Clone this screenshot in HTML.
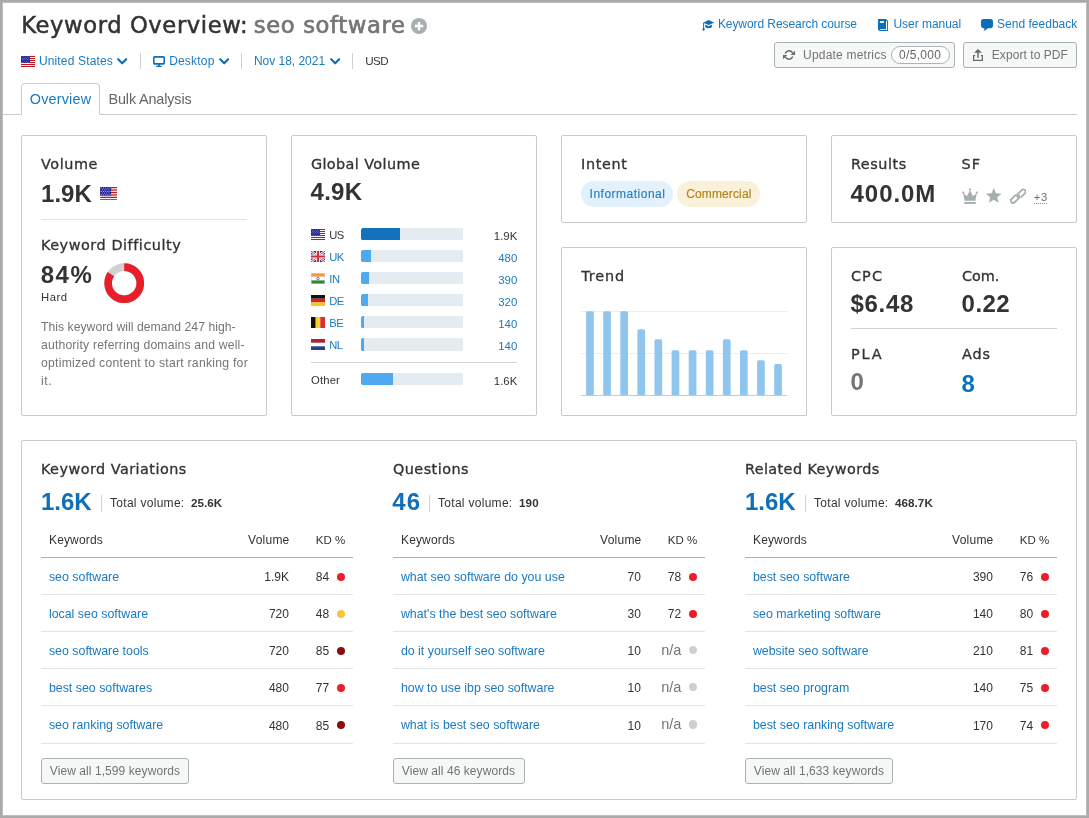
<!DOCTYPE html>
<html lang="en"><head><meta charset="utf-8"><title>Keyword Overview: seo software</title>
<style>
html,body{margin:0;padding:0;background:#fff}
body{width:1089px;height:818px;position:relative;overflow:hidden;font-family:'Liberation Sans',sans-serif;color:#333}
.t{position:absolute;white-space:pre;line-height:1}
.b{position:absolute;box-sizing:border-box;display:block}
.card{position:absolute;box-sizing:border-box;border:1px solid #cacaca;border-radius:2px;background:#fff}
.btn{position:absolute;box-sizing:border-box;border:1px solid #a9b3b6;border-radius:3px;background:#f6f7f7}
.hl{position:absolute;height:1px;background:#e2e5e8}
#wrap{position:absolute;left:0;top:0;width:1089px;height:818px;will-change:transform;background:#fff}
</style></head><body><div id="wrap">

<div class="b" style="left:0;top:0;width:1089px;height:818px;border:2px solid #aaa;z-index:50;pointer-events:none"></div>
<div class="b" style="left:2px;top:2px;width:1085px;height:814px;border:1px solid #bfbfbf;z-index:50;pointer-events:none"></div>
<div class="t" style="left:21.26px;top:14.003px;font-size:22.7px;color:#333;font-family:'DejaVu Sans', 'Liberation Sans', sans-serif;letter-spacing:0.571px;-webkit-text-stroke:.5px #333;">Keyword Overview:</div>
<div class="t" style="left:253.87px;top:14.003px;font-size:22.7px;color:#757575;font-family:'DejaVu Sans', 'Liberation Sans', sans-serif;letter-spacing:0.614px;-webkit-text-stroke:.65px #747474;">seo software</div>
<svg class="b" style="left:411px;top:17.9px;" width="16" height="16" viewBox="0 0 16 16"><circle cx="8" cy="8" r="8" fill="#a6b0b3"/><path d="M8.05 3.9V12.2M3.9 8.05H12.2" stroke="#fff" stroke-width="2.4"/></svg>
<svg class="b" style="left:21px;top:56px;" width="14" height="11" viewBox="0 0 14 11"><rect width="14" height="11" fill="#fff"/><rect x="0" y="0" width="14" height="1.05" fill="#c4161c"/><rect x="0" y="2" width="14" height="1.05" fill="#c4161c"/><rect x="0" y="4" width="14" height="1.05" fill="#c4161c"/><rect x="0" y="6" width="14" height="1.05" fill="#c4161c"/><rect x="0" y="8" width="14" height="1.05" fill="#c4161c"/><rect x="0" y="10" width="14" height="1.05" fill="#c4161c"/><rect width="9" height="7" fill="#1d2396"/><g fill="#fff" opacity=".8"><circle cx="0.90" cy="0.90" r=".42"/><circle cx="2.70" cy="0.90" r=".42"/><circle cx="4.50" cy="0.90" r=".42"/><circle cx="6.30" cy="0.90" r=".42"/><circle cx="8.10" cy="0.90" r=".42"/><circle cx="1.80" cy="2.25" r=".42"/><circle cx="3.60" cy="2.25" r=".42"/><circle cx="5.40" cy="2.25" r=".42"/><circle cx="7.20" cy="2.25" r=".42"/><circle cx="0.90" cy="3.60" r=".42"/><circle cx="2.70" cy="3.60" r=".42"/><circle cx="4.50" cy="3.60" r=".42"/><circle cx="6.30" cy="3.60" r=".42"/><circle cx="8.10" cy="3.60" r=".42"/><circle cx="1.80" cy="4.95" r=".42"/><circle cx="3.60" cy="4.95" r=".42"/><circle cx="5.40" cy="4.95" r=".42"/><circle cx="7.20" cy="4.95" r=".42"/><circle cx="0.90" cy="6.30" r=".42"/><circle cx="2.70" cy="6.30" r=".42"/><circle cx="4.50" cy="6.30" r=".42"/><circle cx="6.30" cy="6.30" r=".42"/><circle cx="8.10" cy="6.30" r=".42"/></g></svg>
<div class="t" style="left:38.90px;top:55.014px;font-size:12px;color:#1a7ac0;letter-spacing:0.159px;">United States</div>
<svg class="b" style="left:117.2px;top:58.4px;" width="10.4" height="6.8" viewBox="0 0 10.4 6.8"><path d="M1.2 1.2L5.2 5.3L9.2 1.2" fill="none" stroke="#0d6eb8" stroke-width="2.1" stroke-linecap="round" stroke-linejoin="round"/></svg>
<div class="b" style="left:140px;top:53px;width:1px;height:16px;background:#d0d0d0"></div>
<svg class="b" style="left:153px;top:55.5px;" width="12" height="11.6" viewBox="0 0 12 11.5"><rect x=".8" y=".8" width="10.4" height="7" rx=".8" fill="none" stroke="#0d6eb8" stroke-width="1.6"/><path d="M6 7.8V10M3.2 10.6H8.8" stroke="#0d6eb8" stroke-width="1.7"/></svg>
<div class="t" style="left:169.15px;top:55.014px;font-size:12px;color:#1a7ac0;letter-spacing:0.195px;">Desktop</div>
<svg class="b" style="left:218.5px;top:58.4px;" width="10.4" height="6.8" viewBox="0 0 10.4 6.8"><path d="M1.2 1.2L5.2 5.3L9.2 1.2" fill="none" stroke="#0d6eb8" stroke-width="2.1" stroke-linecap="round" stroke-linejoin="round"/></svg>
<div class="b" style="left:241px;top:53px;width:1px;height:16px;background:#d0d0d0"></div>
<div class="t" style="left:253.90px;top:55.014px;font-size:12px;color:#1a7ac0;letter-spacing:-0.017px;">Nov 18, 2021</div>
<svg class="b" style="left:329.6px;top:58.4px;" width="10.4" height="6.8" viewBox="0 0 10.4 6.8"><path d="M1.2 1.2L5.2 5.3L9.2 1.2" fill="none" stroke="#0d6eb8" stroke-width="2.1" stroke-linecap="round" stroke-linejoin="round"/></svg>
<div class="b" style="left:352px;top:53px;width:1px;height:16px;background:#d0d0d0"></div>
<div class="t" style="left:365.17px;top:55.009px;font-size:11.6px;color:#333;letter-spacing:-0.537px;">USD</div>
<div class="b" style="left:3px;top:114px;width:1074px;height:1px;background:#cbcbcb"></div>
<div class="b" style="left:21px;top:83px;width:79px;height:32px;border:1px solid #cbcbcb;border-bottom:1px solid #fff;border-radius:4px 4px 0 0;background:#fff"></div>
<div class="t" style="left:29.78px;top:92.010px;font-size:14.4px;color:#1a7ac0;letter-spacing:0.194px;">Overview</div>
<div class="t" style="left:108.48px;top:92.010px;font-size:14.4px;color:#666;letter-spacing:-0.130px;">Bulk Analysis</div>
<svg class="b" style="left:702px;top:19.8px;" width="12.2" height="11.2" viewBox="0 0 12.2 11.2"><path d="M1.2 2.7L6.6 .1L12.1 2.6L6.6 5.1Z" fill="#0d6eb8"/><path d="M3.3 4.6L6.6 6.2L9.9 4.6V7.3Q6.6 9.3 3.3 7.3Z" fill="#0d6eb8"/><path d="M1.6 2.9V8" stroke="#0d6eb8" stroke-width="1"/><path d="M1.6 7.4L3 9.2L1.6 11.2L.2 9.2Z" fill="#0d6eb8"/></svg>
<div class="t" style="left:717.90px;top:18.001px;font-size:12px;color:#1a7ac0;letter-spacing:-0.074px;">Keyword Research course</div>
<svg class="b" style="left:877.9px;top:18.8px;" width="10.2" height="12.2" viewBox="0 0 10.2 12.2"><path d="M0 0H7.9L10.2 1.9V12.2H1.7L0 10.3Z" fill="#0d6eb8"/><path d="M8 1.5L9.1 2.4V11.1H2.2L1.5 10.3H8Z" fill="#fff"/><rect x="1.9" y="2.1" width="4.1" height="1.8" fill="#fff"/></svg>
<div class="t" style="left:893.40px;top:18.001px;font-size:12px;color:#1a7ac0;letter-spacing:-0.023px;">User manual</div>
<svg class="b" style="left:981px;top:18.8px;" width="12" height="12.2" viewBox="0 0 12 12.2"><path d="M2.4 0H9.6Q12 0 12 2.4V6.8Q12 9.2 9.6 9.2H7L3.3 12.1V9.2H2.4Q0 9.2 0 6.8V2.4Q0 0 2.4 0Z" fill="#0d6eb8"/></svg>
<div class="t" style="left:997.00px;top:18.001px;font-size:12px;color:#1a7ac0;letter-spacing:0.020px;">Send feedback</div>
<div class="btn" style="left:774px;top:42px;width:181px;height:26px"></div>
<svg class="b" style="left:783px;top:49.9px;" width="12" height="10" viewBox="0 0 12 10"><path d="M2.2 3.5A4.1 4.1 0 0 1 9.6 2.9" fill="none" stroke="#686868" stroke-width="1.5"/><path d="M9.8 6.5A4.1 4.1 0 0 1 2.4 7.1" fill="none" stroke="#686868" stroke-width="1.5"/><path d="M12 .7V5H7.7Z" fill="#686868"/><path d="M0 9.3V5H4.3Z" fill="#686868"/></svg>
<div class="t" style="left:803.10px;top:49.001px;font-size:12px;color:#737373;letter-spacing:0.200px;">Update metrics</div>
<div class="b" style="left:891px;top:46px;width:59px;height:18px;border:1px solid #aeb3b7;border-radius:9px;background:#fff"></div>
<div class="t" style="left:899.10px;top:49.001px;font-size:12px;color:#666;letter-spacing:0.292px;">0/5,000</div>
<div class="btn" style="left:963px;top:42px;width:114px;height:26px"></div>
<svg class="b" style="left:973px;top:49px;" width="10" height="12" viewBox="0 0 10 12"><path d="M2.1 6.6H.6V11.3H9.4V6.6H7.9" fill="none" stroke="#686868" stroke-width="1.25"/><path d="M5 3.3V8.8" stroke="#686868" stroke-width="1.5"/><path d="M5 0L8.9 3.8H1.1Z" fill="#686868"/></svg>
<div class="t" style="left:991.80px;top:49.001px;font-size:12px;color:#737373;letter-spacing:0.062px;">Export to PDF</div>
<div class="card" style="left:21px;top:135px;width:246px;height:281px"></div>
<div class="card" style="left:291px;top:135px;width:246px;height:281px"></div>
<div class="card" style="left:561px;top:135px;width:246px;height:88px"></div>
<div class="card" style="left:561px;top:247px;width:246px;height:169px"></div>
<div class="card" style="left:831px;top:135px;width:246px;height:88px"></div>
<div class="card" style="left:831px;top:247px;width:246px;height:169px"></div>
<div class="t" style="left:41.03px;top:157.001px;font-size:14.4px;color:#333;font-family:'DejaVu Sans', 'Liberation Sans', sans-serif;letter-spacing:0.582px;-webkit-text-stroke:.32px #333;">Volume</div>
<div class="t" style="left:41.00px;top:182.012px;font-size:24px;color:#333;font-weight:700;letter-spacing:0.032px;">1.9K</div>
<svg class="b" style="left:99.5px;top:187px;" width="17.4" height="13.4" viewBox="0 0 14 11"><rect width="14" height="11" fill="#fff"/><rect x="0" y="0" width="14" height="1.05" fill="#c4161c"/><rect x="0" y="2" width="14" height="1.05" fill="#c4161c"/><rect x="0" y="4" width="14" height="1.05" fill="#c4161c"/><rect x="0" y="6" width="14" height="1.05" fill="#c4161c"/><rect x="0" y="8" width="14" height="1.05" fill="#c4161c"/><rect x="0" y="10" width="14" height="1.05" fill="#c4161c"/><rect width="9" height="7" fill="#1d2396"/><g fill="#fff" opacity=".8"><circle cx="0.90" cy="0.90" r=".42"/><circle cx="2.70" cy="0.90" r=".42"/><circle cx="4.50" cy="0.90" r=".42"/><circle cx="6.30" cy="0.90" r=".42"/><circle cx="8.10" cy="0.90" r=".42"/><circle cx="1.80" cy="2.25" r=".42"/><circle cx="3.60" cy="2.25" r=".42"/><circle cx="5.40" cy="2.25" r=".42"/><circle cx="7.20" cy="2.25" r=".42"/><circle cx="0.90" cy="3.60" r=".42"/><circle cx="2.70" cy="3.60" r=".42"/><circle cx="4.50" cy="3.60" r=".42"/><circle cx="6.30" cy="3.60" r=".42"/><circle cx="8.10" cy="3.60" r=".42"/><circle cx="1.80" cy="4.95" r=".42"/><circle cx="3.60" cy="4.95" r=".42"/><circle cx="5.40" cy="4.95" r=".42"/><circle cx="7.20" cy="4.95" r=".42"/><circle cx="0.90" cy="6.30" r=".42"/><circle cx="2.70" cy="6.30" r=".42"/><circle cx="4.50" cy="6.30" r=".42"/><circle cx="6.30" cy="6.30" r=".42"/><circle cx="8.10" cy="6.30" r=".42"/></g></svg>
<div class="hl" style="left:41px;top:219px;width:206px"></div>
<div class="t" style="left:40.88px;top:238.001px;font-size:14.4px;color:#333;font-family:'DejaVu Sans', 'Liberation Sans', sans-serif;letter-spacing:0.560px;-webkit-text-stroke:.32px #333;">Keyword Difficulty</div>
<div class="t" style="left:40.80px;top:263.009px;font-size:24px;color:#333;font-weight:700;letter-spacing:1.477px;">84%</div>
<div class="t" style="left:41.04px;top:292.000px;font-size:11.3px;color:#333;letter-spacing:0.477px;">Hard</div>
<svg class="b" style="left:103.8px;top:262.9px;" width="40.4" height="40.4" viewBox="0 0 41 41"><circle cx="20.5" cy="20.5" r="16.3" fill="none" stroke="#d1d1d1" stroke-width="7.8"/><circle cx="20.5" cy="20.5" r="16.3" fill="none" stroke="#e81f2a" stroke-width="7.8" stroke-dasharray="86.03 102.42" transform="rotate(-90 20.5 20.5)"/></svg>
<div class="t" style="left:40.99px;top:321.010px;font-size:12.2px;color:#757575;letter-spacing:0.026px;">This keyword will demand 247 high-</div>
<div class="t" style="left:40.99px;top:339.013px;font-size:12.2px;color:#757575;letter-spacing:0.178px;">authority referring domains and well-</div>
<div class="t" style="left:40.99px;top:357.001px;font-size:12.2px;color:#757575;letter-spacing:0.259px;">optimized content to start ranking for</div>
<div class="t" style="left:40.99px;top:375.004px;font-size:12.2px;color:#757575;letter-spacing:0.568px;">it.</div>
<div class="t" style="left:310.88px;top:157.001px;font-size:14.4px;color:#333;font-family:'DejaVu Sans', 'Liberation Sans', sans-serif;letter-spacing:0.410px;-webkit-text-stroke:.32px #333;">Global Volume</div>
<div class="t" style="left:310.60px;top:180.012px;font-size:24px;color:#333;font-weight:700;letter-spacing:0.232px;">4.9K</div>
<svg class="b" style="left:311px;top:228.7px;" width="14" height="11" viewBox="0 0 14 11"><rect width="14" height="11" fill="#fff"/><rect x="0" y="0" width="14" height="1.05" fill="#c4161c"/><rect x="0" y="2" width="14" height="1.05" fill="#c4161c"/><rect x="0" y="4" width="14" height="1.05" fill="#c4161c"/><rect x="0" y="6" width="14" height="1.05" fill="#c4161c"/><rect x="0" y="8" width="14" height="1.05" fill="#c4161c"/><rect x="0" y="10" width="14" height="1.05" fill="#c4161c"/><rect width="9" height="7" fill="#1d2396"/><g fill="#fff" opacity=".8"><circle cx="0.90" cy="0.90" r=".42"/><circle cx="2.70" cy="0.90" r=".42"/><circle cx="4.50" cy="0.90" r=".42"/><circle cx="6.30" cy="0.90" r=".42"/><circle cx="8.10" cy="0.90" r=".42"/><circle cx="1.80" cy="2.25" r=".42"/><circle cx="3.60" cy="2.25" r=".42"/><circle cx="5.40" cy="2.25" r=".42"/><circle cx="7.20" cy="2.25" r=".42"/><circle cx="0.90" cy="3.60" r=".42"/><circle cx="2.70" cy="3.60" r=".42"/><circle cx="4.50" cy="3.60" r=".42"/><circle cx="6.30" cy="3.60" r=".42"/><circle cx="8.10" cy="3.60" r=".42"/><circle cx="1.80" cy="4.95" r=".42"/><circle cx="3.60" cy="4.95" r=".42"/><circle cx="5.40" cy="4.95" r=".42"/><circle cx="7.20" cy="4.95" r=".42"/><circle cx="0.90" cy="6.30" r=".42"/><circle cx="2.70" cy="6.30" r=".42"/><circle cx="4.50" cy="6.30" r=".42"/><circle cx="6.30" cy="6.30" r=".42"/><circle cx="8.10" cy="6.30" r=".42"/></g></svg>
<div class="t" style="left:329.14px;top:230.013px;font-size:11.2px;color:#333;letter-spacing:-0.350px;">US</div>
<div class="b" style="left:361px;top:228.1px;width:102px;height:12.2px;border-radius:1.6px;background:#e4ebf1;overflow:hidden"><div style="width:38.8px;height:100%;background:#1173bf;border-radius:1.6px 0 0 1.6px"></div></div>
<div class="t" style="right:571.73px;top:231.000px;font-size:11.4px;color:#333;">1.9K</div>
<svg class="b" style="left:311px;top:250.8px;" width="14" height="11" viewBox="0 0 14 11"><rect width="14" height="11" fill="#2b3f8f"/><path d="M0 0L14 11M14 0L0 11" stroke="#fff" stroke-width="2.4"/><path d="M0 0L14 11M14 0L0 11" stroke="#d22f3a" stroke-width="1"/><path d="M7 0V11M0 5.5H14" stroke="#fff" stroke-width="3.8"/><path d="M7 0V11M0 5.5H14" stroke="#d22f3a" stroke-width="2.2"/></svg>
<div class="t" style="left:329.14px;top:252.000px;font-size:11.2px;color:#1a7ac0;letter-spacing:-0.350px;">UK</div>
<div class="b" style="left:361px;top:250.2px;width:102px;height:12.2px;border-radius:1.6px;background:#e4ebf1;overflow:hidden"><div style="width:10px;height:100%;background:#4fa9ee;border-radius:1.6px 0 0 1.6px"></div></div>
<div class="t" style="right:571.73px;top:253.003px;font-size:11.4px;color:#1a7ac0;">480</div>
<svg class="b" style="left:311px;top:272.8px;" width="14" height="11" viewBox="0 0 14 11"><rect width="14" height="11" fill="#fff"/><rect width="14" height="3.6" fill="#f59a3a"/><rect y="7.4" width="14" height="3.6" fill="#2a8a3a"/><circle cx="7" cy="5.5" r="1.3" fill="none" stroke="#3446a8" stroke-width=".7"/><rect x=".25" y=".25" width="13.5" height="10.5" fill="none" stroke="#d8d8d8" stroke-width=".5"/></svg>
<div class="t" style="left:329.14px;top:274.004px;font-size:11.2px;color:#1a7ac0;letter-spacing:-0.350px;">IN</div>
<div class="b" style="left:361px;top:272.2px;width:102px;height:12.2px;border-radius:1.6px;background:#e4ebf1;overflow:hidden"><div style="width:8px;height:100%;background:#4fa9ee;border-radius:1.6px 0 0 1.6px"></div></div>
<div class="t" style="right:571.73px;top:275.006px;font-size:11.4px;color:#1a7ac0;">390</div>
<svg class="b" style="left:311px;top:294.9px;" width="14" height="11" viewBox="0 0 14 11"><rect width="14" height="3.7" fill="#111"/><rect y="3.7" width="14" height="3.7" fill="#d6202a"/><rect y="7.3" width="14" height="3.7" fill="#f6c81e"/></svg>
<div class="t" style="left:329.14px;top:296.007px;font-size:11.2px;color:#1a7ac0;letter-spacing:-0.350px;">DE</div>
<div class="b" style="left:361px;top:294.3px;width:102px;height:12.2px;border-radius:1.6px;background:#e4ebf1;overflow:hidden"><div style="width:7px;height:100%;background:#4fa9ee;border-radius:1.6px 0 0 1.6px"></div></div>
<div class="t" style="right:571.73px;top:297.009px;font-size:11.4px;color:#1a7ac0;">320</div>
<svg class="b" style="left:311px;top:316.9px;" width="14" height="11" viewBox="0 0 14 11"><rect width="4.7" height="11" fill="#111"/><rect x="4.7" width="4.7" height="11" fill="#f6d32a"/><rect x="9.3" width="4.7" height="11" fill="#e02b35"/></svg>
<div class="t" style="left:329.14px;top:318.010px;font-size:11.2px;color:#1a7ac0;letter-spacing:-0.350px;">BE</div>
<div class="b" style="left:361px;top:316.3px;width:102px;height:12.2px;border-radius:1.6px;background:#e4ebf1;overflow:hidden"><div style="width:3px;height:100%;background:#4fa9ee;border-radius:1.6px 0 0 1.6px"></div></div>
<div class="t" style="right:571.73px;top:319.012px;font-size:11.4px;color:#1a7ac0;">140</div>
<svg class="b" style="left:311px;top:338.9px;" width="14" height="11" viewBox="0 0 14 11"><rect width="14" height="11" fill="#fff"/><rect width="14" height="3.7" fill="#b3212f"/><rect y="7.3" width="14" height="3.7" fill="#26408f"/></svg>
<div class="t" style="left:329.14px;top:340.013px;font-size:11.2px;color:#1a7ac0;letter-spacing:-0.350px;">NL</div>
<div class="b" style="left:361px;top:338.4px;width:102px;height:12.2px;border-radius:1.6px;background:#e4ebf1;overflow:hidden"><div style="width:3px;height:100%;background:#4fa9ee;border-radius:1.6px 0 0 1.6px"></div></div>
<div class="t" style="right:571.73px;top:341.000px;font-size:11.4px;color:#1a7ac0;">140</div>
<div class="hl" style="left:311px;top:362px;width:206px;background:#d3d3d3"></div>
<div class="t" style="left:311.04px;top:375.006px;font-size:11.3px;color:#333;letter-spacing:0.150px;">Other</div>
<div class="b" style="left:361px;top:373.1px;width:102px;height:12.2px;border-radius:1.6px;background:#e4ebf1;overflow:hidden"><div style="width:31.6px;height:100%;background:#4fa9ee;border-radius:1.6px 0 0 1.6px"></div></div>
<div class="t" style="right:571.73px;top:376.000px;font-size:11.4px;color:#333;">1.6K</div>
<div class="t" style="left:580.98px;top:157.001px;font-size:14.4px;color:#333;font-family:'DejaVu Sans', 'Liberation Sans', sans-serif;letter-spacing:0.663px;-webkit-text-stroke:.32px #333;">Intent</div>
<div class="b" style="left:581px;top:181px;width:92px;height:25.5px;border-radius:13px;background:#e3f1fc"></div>
<div class="t" style="left:589.60px;top:188.014px;font-size:12px;color:#2a7dc2;letter-spacing:0.494px;-webkit-text-stroke:.15px #2a7dc2;">Informational</div>
<div class="b" style="left:677px;top:181px;width:83.3px;height:25.5px;border-radius:13px;background:#fbf0d8"></div>
<div class="t" style="left:686.20px;top:188.014px;font-size:12px;color:#b1831d;letter-spacing:0.132px;-webkit-text-stroke:.15px #b1831d;">Commercial</div>
<div class="t" style="left:581.28px;top:269.014px;font-size:14.4px;color:#333;font-family:'DejaVu Sans', 'Liberation Sans', sans-serif;letter-spacing:0.887px;-webkit-text-stroke:.32px #333;">Trend</div>
<div class="hl" style="left:581px;top:311px;width:206px;background:#ededed"></div>
<div class="hl" style="left:581px;top:353px;width:206px;background:#ededed"></div>
<div class="hl" style="left:581px;top:395px;width:206px;background:#c9c9c9"></div>
<svg class="b" style="left:581px;top:305px;" width="206" height="90" viewBox="0 0 206 90"><g fill="#90c6ed"><path d="M5.10 90.00V7.80Q5.10 6.20 6.70 6.20H11.20Q12.80 6.20 12.80 7.80V90.00Z"/><path d="M22.20 90.00V7.80Q22.20 6.20 23.80 6.20H28.30Q29.90 6.20 29.90 7.80V90.00Z"/><path d="M39.30 90.00V7.80Q39.30 6.20 40.90 6.20H45.40Q47.00 6.20 47.00 7.80V90.00Z"/><path d="M56.40 90.00V25.90Q56.40 24.30 58.00 24.30H62.50Q64.10 24.30 64.10 25.90V90.00Z"/><path d="M73.50 90.00V35.80Q73.50 34.20 75.10 34.20H79.60Q81.20 34.20 81.20 35.80V90.00Z"/><path d="M90.60 90.00V46.80Q90.60 45.20 92.20 45.20H96.70Q98.30 45.20 98.30 46.80V90.00Z"/><path d="M107.70 90.00V46.80Q107.70 45.20 109.30 45.20H113.80Q115.40 45.20 115.40 46.80V90.00Z"/><path d="M124.80 90.00V46.80Q124.80 45.20 126.40 45.20H130.90Q132.50 45.20 132.50 46.80V90.00Z"/><path d="M141.90 90.00V35.80Q141.90 34.20 143.50 34.20H148.00Q149.60 34.20 149.60 35.80V90.00Z"/><path d="M159.00 90.00V46.80Q159.00 45.20 160.60 45.20H165.10Q166.70 45.20 166.70 46.80V90.00Z"/><path d="M176.10 90.00V56.90Q176.10 55.30 177.70 55.30H182.20Q183.80 55.30 183.80 56.90V90.00Z"/><path d="M193.20 90.00V60.70Q193.20 59.10 194.80 59.10H199.30Q200.90 59.10 200.90 60.70V90.00Z"/></g></svg>
<div class="t" style="left:850.88px;top:157.001px;font-size:14.4px;color:#333;font-family:'DejaVu Sans', 'Liberation Sans', sans-serif;letter-spacing:0.579px;-webkit-text-stroke:.32px #333;">Results</div>
<div class="t" style="left:961.58px;top:157.001px;font-size:14.4px;color:#333;font-family:'DejaVu Sans', 'Liberation Sans', sans-serif;letter-spacing:1.018px;-webkit-text-stroke:.32px #333;">SF</div>
<div class="t" style="left:850.60px;top:182.012px;font-size:24px;color:#333;font-weight:700;letter-spacing:0.928px;">400.0M</div>
<svg class="b" style="left:962px;top:188px;" width="16" height="16" viewBox="0 0 16 16"><path d="M2.7 12.7L1.1 5.1L5 8.3L8 2L11 8.3L14.9 5.1L13.3 12.7Z" fill="#a5afb2"/><circle cx="8" cy="1.3" r="1.15" fill="#a5afb2"/><circle cx="1.25" cy="4.6" r="1.15" fill="#a5afb2"/><circle cx="14.75" cy="4.6" r="1.15" fill="#a5afb2"/><rect x="2.2" y="14" width="11.6" height="1.9" fill="#a5afb2"/></svg>
<svg class="b" style="left:986.1px;top:188.2px;" width="15.5" height="14.8" viewBox="0 0 15.5 14.8"><path d="M7.75 0.00L9.92 5.16L15.50 5.63L11.27 9.29L12.54 14.74L7.75 11.85L2.96 14.74L4.23 9.29L-0.00 5.63L5.58 5.16Z" fill="#a5afb2"/></svg>
<svg class="b" style="left:1009.8px;top:187.8px;" width="16.4" height="16.4" viewBox="0 0 16.4 16.4"><g transform="rotate(-45 8.2 8.2)" fill="none" stroke="#a5afb2" stroke-width="1.85" stroke-linecap="round"><path d="M6.9 5.45H1.45A2.25 2.25 0 0 0 1.45 9.95H7.05A2.25 2.25 0 0 0 9.3 7.7" transform="translate(0 .05)"/><path d="M9.5 10.95H14.95A2.25 2.25 0 0 0 14.95 6.45H9.35A2.25 2.25 0 0 0 7.1 8.7"/></g></svg>
<div class="t" style="left:1033.64px;top:192.004px;font-size:11.2px;color:#707070;letter-spacing:0.900px;">+3</div>
<div class="b" style="left:1034px;top:203px;width:14px;height:1px;background:repeating-linear-gradient(90deg,#808588 0 1px,transparent 1px 2px)"></div>
<div class="t" style="left:850.88px;top:269.014px;font-size:14.4px;color:#333;font-family:'DejaVu Sans', 'Liberation Sans', sans-serif;letter-spacing:1.179px;-webkit-text-stroke:.32px #333;">CPC</div>
<div class="t" style="left:962.08px;top:269.014px;font-size:14.4px;color:#333;font-family:'DejaVu Sans', 'Liberation Sans', sans-serif;letter-spacing:-0.038px;-webkit-text-stroke:.32px #333;">Com.</div>
<div class="t" style="left:850.60px;top:292.006px;font-size:24px;color:#333;font-weight:700;letter-spacing:0.659px;">$6.48</div>
<div class="t" style="left:961.60px;top:292.006px;font-size:24px;color:#333;font-weight:700;letter-spacing:0.460px;">0.22</div>
<div class="hl" style="left:851px;top:328px;width:206px;background:#d0d0d0"></div>
<div class="t" style="left:850.88px;top:347.010px;font-size:14.4px;color:#333;font-family:'DejaVu Sans', 'Liberation Sans', sans-serif;letter-spacing:1.933px;-webkit-text-stroke:.32px #333;">PLA</div>
<div class="t" style="left:962.08px;top:347.010px;font-size:14.4px;color:#333;font-family:'DejaVu Sans', 'Liberation Sans', sans-serif;letter-spacing:0.803px;-webkit-text-stroke:.32px #333;">Ads</div>
<div class="t" style="left:850.60px;top:370.012px;font-size:24px;color:#757575;font-weight:700;">0</div>
<div class="t" style="left:961.60px;top:372.012px;font-size:24px;color:#0c6fba;font-weight:700;">8</div>
<div class="card" style="left:21px;top:440px;width:1056px;height:360px"></div>
<div class="t" style="left:40.88px;top:462.001px;font-size:14.4px;color:#333;font-family:'DejaVu Sans', 'Liberation Sans', sans-serif;letter-spacing:0.473px;-webkit-text-stroke:.32px #333;">Keyword Variations</div>
<div class="t" style="left:41.00px;top:490.009px;font-size:24px;color:#0f6fb9;font-weight:700;letter-spacing:-0.068px;">1.6K</div>
<div class="b" style="left:101px;top:494.5px;width:1px;height:17px;background:#cfd3d6"></div>
<div class="t" style="left:110.00px;top:497.001px;font-size:12px;color:#333;letter-spacing:0.291px;">Total volume:</div>
<div class="t" style="left:190.92px;top:497.012px;font-size:11.6px;color:#333;font-weight:700;letter-spacing:0.086px;">25.6K</div>
<div class="t" style="left:49.00px;top:534.001px;font-size:12px;color:#333;letter-spacing:0.145px;">Keywords</div>
<div class="t" style="right:799.47px;top:534.001px;font-size:12px;color:#333;letter-spacing:0.234px;">Volume</div>
<div class="t" style="right:743.81px;top:535.003px;font-size:11.5px;color:#333;letter-spacing:0.015px;">KD %</div>
<div class="hl" style="left:41px;top:557px;width:312px;background:#a9b4b9"></div>
<div class="t" style="left:48.88px;top:571.010px;font-size:12.4px;color:#1a7ac0;">seo software</div>
<div class="t" style="right:799.95px;top:571.001px;font-size:12px;color:#333;letter-spacing:0.050px;">1.9K</div>
<div class="t" style="right:759.85px;top:571.001px;font-size:12px;color:#333;letter-spacing:0.050px;">84</div>
<div class="b" style="left:336.8px;top:572.8px;width:8.4px;height:8.4px;border-radius:50%;background:#e81f2a"></div>
<div class="hl" style="left:41px;top:594px;width:312px"></div>
<div class="t" style="left:48.88px;top:608.013px;font-size:12.4px;color:#1a7ac0;">local seo software</div>
<div class="t" style="right:799.95px;top:608.004px;font-size:12px;color:#333;letter-spacing:0.050px;">720</div>
<div class="t" style="right:759.85px;top:608.004px;font-size:12px;color:#333;letter-spacing:0.050px;">48</div>
<div class="b" style="left:336.8px;top:609.8px;width:8.4px;height:8.4px;border-radius:50%;background:#fbc23c"></div>
<div class="hl" style="left:41px;top:631px;width:312px"></div>
<div class="t" style="left:48.88px;top:645.016px;font-size:12.4px;color:#1a7ac0;">seo software tools</div>
<div class="t" style="right:799.95px;top:645.008px;font-size:12px;color:#333;letter-spacing:0.050px;">720</div>
<div class="t" style="right:759.85px;top:645.008px;font-size:12px;color:#333;letter-spacing:0.050px;">85</div>
<div class="b" style="left:336.8px;top:646.9px;width:8.4px;height:8.4px;border-radius:50%;background:#8a0d12"></div>
<div class="hl" style="left:41px;top:668px;width:312px"></div>
<div class="t" style="left:48.88px;top:682.003px;font-size:12.4px;color:#1a7ac0;">best seo softwares</div>
<div class="t" style="right:799.95px;top:682.011px;font-size:12px;color:#333;letter-spacing:0.050px;">480</div>
<div class="t" style="right:759.85px;top:682.011px;font-size:12px;color:#333;letter-spacing:0.050px;">77</div>
<div class="b" style="left:336.8px;top:683.9px;width:8.4px;height:8.4px;border-radius:50%;background:#e81f2a"></div>
<div class="hl" style="left:41px;top:705px;width:312px"></div>
<div class="t" style="left:48.88px;top:719.007px;font-size:12.4px;color:#1a7ac0;">seo ranking software</div>
<div class="t" style="right:799.95px;top:720.014px;font-size:12px;color:#333;letter-spacing:0.050px;">480</div>
<div class="t" style="right:759.85px;top:720.014px;font-size:12px;color:#333;letter-spacing:0.050px;">85</div>
<div class="b" style="left:336.8px;top:721.0px;width:8.4px;height:8.4px;border-radius:50%;background:#8a0d12"></div>
<div class="hl" style="left:41px;top:743px;width:312px"></div>
<div class="btn" style="left:41px;top:758px;width:148px;height:26px"></div>
<div class="t" style="left:49.80px;top:765.011px;font-size:12px;color:#737373;letter-spacing:0.077px;">View all 1,599 keywords</div>
<div class="t" style="left:392.88px;top:462.001px;font-size:14.4px;color:#333;font-family:'DejaVu Sans', 'Liberation Sans', sans-serif;letter-spacing:0.483px;-webkit-text-stroke:.32px #333;">Questions</div>
<div class="t" style="left:392.20px;top:490.009px;font-size:24px;color:#0f6fb9;font-weight:700;letter-spacing:1.197px;">46</div>
<div class="b" style="left:429px;top:494.5px;width:1px;height:17px;background:#cfd3d6"></div>
<div class="t" style="left:438.00px;top:497.001px;font-size:12px;color:#333;letter-spacing:0.291px;">Total volume:</div>
<div class="t" style="left:518.92px;top:497.012px;font-size:11.6px;color:#333;font-weight:700;letter-spacing:0.268px;">190</div>
<div class="t" style="left:401.00px;top:534.001px;font-size:12px;color:#333;letter-spacing:0.145px;">Keywords</div>
<div class="t" style="right:447.47px;top:534.001px;font-size:12px;color:#333;letter-spacing:0.234px;">Volume</div>
<div class="t" style="right:391.81px;top:535.003px;font-size:11.5px;color:#333;letter-spacing:0.015px;">KD %</div>
<div class="hl" style="left:393px;top:557px;width:312px;background:#a9b4b9"></div>
<div class="t" style="left:400.88px;top:571.010px;font-size:12.4px;color:#1a7ac0;">what seo software do you use</div>
<div class="t" style="right:447.95px;top:571.001px;font-size:12px;color:#333;letter-spacing:0.050px;">70</div>
<div class="t" style="right:407.85px;top:571.001px;font-size:12px;color:#333;letter-spacing:0.050px;">78</div>
<div class="b" style="left:688.8px;top:572.8px;width:8.4px;height:8.4px;border-radius:50%;background:#e81f2a"></div>
<div class="hl" style="left:393px;top:594px;width:312px"></div>
<div class="t" style="left:400.88px;top:608.013px;font-size:12.4px;color:#1a7ac0;">what's the best seo software</div>
<div class="t" style="right:447.95px;top:608.004px;font-size:12px;color:#333;letter-spacing:0.050px;">30</div>
<div class="t" style="right:407.85px;top:608.004px;font-size:12px;color:#333;letter-spacing:0.050px;">72</div>
<div class="b" style="left:688.8px;top:609.8px;width:8.4px;height:8.4px;border-radius:50%;background:#e81f2a"></div>
<div class="hl" style="left:393px;top:631px;width:312px"></div>
<div class="t" style="left:400.88px;top:645.016px;font-size:12.4px;color:#1a7ac0;">do it yourself seo software</div>
<div class="t" style="right:447.95px;top:645.008px;font-size:12px;color:#333;letter-spacing:0.050px;">10</div>
<div class="t" style="right:407.67px;top:643.013px;font-size:14.5px;color:#757575;">n/a</div>
<div class="b" style="left:688.8px;top:646.1px;width:8.4px;height:8.4px;border-radius:50%;background:#cfcfcf"></div>
<div class="hl" style="left:393px;top:668px;width:312px"></div>
<div class="t" style="left:400.88px;top:682.003px;font-size:12.4px;color:#1a7ac0;">how to use ibp seo software</div>
<div class="t" style="right:447.95px;top:682.011px;font-size:12px;color:#333;letter-spacing:0.050px;">10</div>
<div class="t" style="right:407.67px;top:680.001px;font-size:14.5px;color:#757575;">n/a</div>
<div class="b" style="left:688.8px;top:683.1px;width:8.4px;height:8.4px;border-radius:50%;background:#cfcfcf"></div>
<div class="hl" style="left:393px;top:705px;width:312px"></div>
<div class="t" style="left:400.88px;top:719.007px;font-size:12.4px;color:#1a7ac0;">what is best seo software</div>
<div class="t" style="right:447.95px;top:720.014px;font-size:12px;color:#333;letter-spacing:0.050px;">10</div>
<div class="t" style="right:407.67px;top:717.004px;font-size:14.5px;color:#757575;">n/a</div>
<div class="b" style="left:688.8px;top:720.2px;width:8.4px;height:8.4px;border-radius:50%;background:#cfcfcf"></div>
<div class="hl" style="left:393px;top:743px;width:312px"></div>
<div class="btn" style="left:393px;top:758px;width:132px;height:26px"></div>
<div class="t" style="left:401.80px;top:765.011px;font-size:12px;color:#737373;letter-spacing:0.071px;">View all 46 keywords</div>
<div class="t" style="left:744.88px;top:462.001px;font-size:14.4px;color:#333;font-family:'DejaVu Sans', 'Liberation Sans', sans-serif;letter-spacing:0.417px;-webkit-text-stroke:.32px #333;">Related Keywords</div>
<div class="t" style="left:745.00px;top:490.009px;font-size:24px;color:#0f6fb9;font-weight:700;letter-spacing:-0.068px;">1.6K</div>
<div class="b" style="left:805px;top:494.5px;width:1px;height:17px;background:#cfd3d6"></div>
<div class="t" style="left:814.00px;top:497.001px;font-size:12px;color:#333;letter-spacing:0.291px;">Total volume:</div>
<div class="t" style="left:894.92px;top:497.012px;font-size:11.6px;color:#333;font-weight:700;letter-spacing:0.100px;">468.7K</div>
<div class="t" style="left:753.00px;top:534.001px;font-size:12px;color:#333;letter-spacing:0.145px;">Keywords</div>
<div class="t" style="right:95.47px;top:534.001px;font-size:12px;color:#333;letter-spacing:0.234px;">Volume</div>
<div class="t" style="right:39.81px;top:535.003px;font-size:11.5px;color:#333;letter-spacing:0.015px;">KD %</div>
<div class="hl" style="left:745px;top:557px;width:312px;background:#a9b4b9"></div>
<div class="t" style="left:752.88px;top:571.010px;font-size:12.4px;color:#1a7ac0;">best seo software</div>
<div class="t" style="right:95.95px;top:571.001px;font-size:12px;color:#333;letter-spacing:0.050px;">390</div>
<div class="t" style="right:55.85px;top:571.001px;font-size:12px;color:#333;letter-spacing:0.050px;">76</div>
<div class="b" style="left:1040.8px;top:572.8px;width:8.4px;height:8.4px;border-radius:50%;background:#e81f2a"></div>
<div class="hl" style="left:745px;top:594px;width:312px"></div>
<div class="t" style="left:752.88px;top:608.013px;font-size:12.4px;color:#1a7ac0;">seo marketing software</div>
<div class="t" style="right:95.95px;top:608.004px;font-size:12px;color:#333;letter-spacing:0.050px;">140</div>
<div class="t" style="right:55.85px;top:608.004px;font-size:12px;color:#333;letter-spacing:0.050px;">80</div>
<div class="b" style="left:1040.8px;top:609.8px;width:8.4px;height:8.4px;border-radius:50%;background:#e81f2a"></div>
<div class="hl" style="left:745px;top:631px;width:312px"></div>
<div class="t" style="left:752.88px;top:645.016px;font-size:12.4px;color:#1a7ac0;">website seo software</div>
<div class="t" style="right:95.95px;top:645.008px;font-size:12px;color:#333;letter-spacing:0.050px;">210</div>
<div class="t" style="right:55.85px;top:645.008px;font-size:12px;color:#333;letter-spacing:0.050px;">81</div>
<div class="b" style="left:1040.8px;top:646.9px;width:8.4px;height:8.4px;border-radius:50%;background:#e81f2a"></div>
<div class="hl" style="left:745px;top:668px;width:312px"></div>
<div class="t" style="left:752.88px;top:682.003px;font-size:12.4px;color:#1a7ac0;">best seo program</div>
<div class="t" style="right:95.95px;top:682.011px;font-size:12px;color:#333;letter-spacing:0.050px;">140</div>
<div class="t" style="right:55.85px;top:682.011px;font-size:12px;color:#333;letter-spacing:0.050px;">75</div>
<div class="b" style="left:1040.8px;top:683.9px;width:8.4px;height:8.4px;border-radius:50%;background:#e81f2a"></div>
<div class="hl" style="left:745px;top:705px;width:312px"></div>
<div class="t" style="left:752.88px;top:719.007px;font-size:12.4px;color:#1a7ac0;">best seo ranking software</div>
<div class="t" style="right:95.95px;top:720.014px;font-size:12px;color:#333;letter-spacing:0.050px;">170</div>
<div class="t" style="right:55.85px;top:720.014px;font-size:12px;color:#333;letter-spacing:0.050px;">74</div>
<div class="b" style="left:1040.8px;top:721.0px;width:8.4px;height:8.4px;border-radius:50%;background:#e81f2a"></div>
<div class="hl" style="left:745px;top:743px;width:312px"></div>
<div class="btn" style="left:745px;top:758px;width:148px;height:26px"></div>
<div class="t" style="left:753.80px;top:765.011px;font-size:12px;color:#737373;letter-spacing:0.077px;">View all 1,633 keywords</div>
</div></body></html>
